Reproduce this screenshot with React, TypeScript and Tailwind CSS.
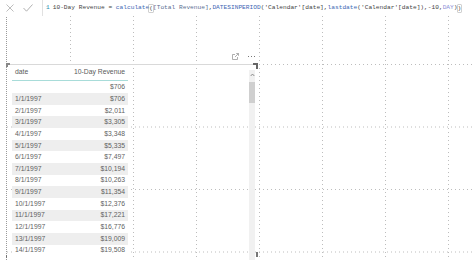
import React from "react";

const rows: [string, string][] = [
  ["", "$706"],
  ["1/1/1997", "$706"],
  ["2/1/1997", "$2,011"],
  ["3/1/1997", "$3,305"],
  ["4/1/1997", "$3,348"],
  ["5/1/1997", "$5,335"],
  ["6/1/1997", "$7,497"],
  ["7/1/1997", "$10,194"],
  ["8/1/1997", "$10,263"],
  ["9/1/1997", "$11,354"],
  ["10/1/1997", "$12,376"],
  ["11/1/1997", "$17,221"],
  ["12/1/1997", "$16,776"],
  ["13/1/1997", "$19,009"],
  ["14/1/1997", "$19,508"],
];

const gridX = [70, 133, 196, 259, 322, 385, 448];
const gridY = [64, 126.5, 189, 251.5];

function CanvasGrid() {
  return (
    <svg className="absolute inset-0" width={474} height={260}>
      {gridX.map((x) => (
        <line key={x} x1={x + 0.5} y1={16} x2={x + 0.5} y2={260} stroke="#bdbdbd" strokeDasharray="1 3" />
      ))}
      {gridY.map((y) => (
        <line key={y} x1={7} y1={y + 0.5} x2={474} y2={y + 0.5} stroke="#bdbdbd" strokeDasharray="1 3" />
      ))}
      {/* page edge */}
      <line x1={6.5} y1={17} x2={6.5} y2={260} stroke="#9a9a9a" strokeDasharray="1 1" />
    </svg>
  );
}

function FormulaBar() {
  return (
    <div className="relative z-10 flex h-[16px] w-full bg-white">
      <div className="flex w-[43px] items-center gap-[9px] border-r border-[#e1e1e1] pl-[6px]">
        <svg width="8" height="8" viewBox="0 0 8 8">
          <path d="M0.5 0.5 L7.5 7.5 M7.5 0.5 L0.5 7.5" stroke="#b5b5b5" strokeWidth="0.9" fill="none" />
        </svg>
        <svg width="10" height="8" viewBox="0 0 10 8">
          <path d="M0.5 4 L3.5 7.2 L9.5 0.5" stroke="#a8a8a8" strokeWidth="0.9" fill="none" />
        </svg>
      </div>
      <div className="flex items-center pl-[3px] font-['Liberation_Mono',monospace] text-[6.2px] text-[#444] whitespace-pre">
        <span className="mr-[3px] text-[#2b91af]">1</span>
        <span>10-Day Revenue = </span>
        <span className="text-[#3e68b4]">calculate</span>
        <span className="inline-block h-[7px] leading-[7px] shadow-[0_0_0_0.5px_#a0a0a0]">(</span>
        <span className="text-[#5a6f93]">[Total Revenue]</span>
        <span>,</span>
        <span className="text-[#3e68b4]">DATESINPERIOD</span>
        <span>('Calendar'[date],</span>
        <span className="text-[#3e68b4]">lastdate</span>
        <span>('Calendar'[date]),-10,</span>
        <span className="text-[#8b8fd8]">DAY</span>
        <span>)</span>
        <span className="inline-block h-[7px] leading-[7px] shadow-[0_0_0_0.5px_#a0a0a0]">)</span>
      </div>
    </div>
  );
}

function TableVisual() {
  return (
    <div className="absolute left-[8px] top-[64px] h-[200px] w-[250px]">
      {/* header icons */}
      <div className="absolute right-[3px] top-[-11px] flex items-center gap-[9px]">
        <svg width="7" height="7" viewBox="0 0 7 7">
          <path d="M0.5 1.5 V6.5 H5.5 M0.5 1.5 H3 M5.5 6.5 V4" stroke="#9a9a9a" strokeWidth="0.8" fill="none" />
          <path d="M3 4 L6.5 0.5 M4.2 0.5 H6.5 V2.8" stroke="#9a9a9a" strokeWidth="0.8" fill="none" />
        </svg>
        <div className="flex gap-[1.5px]">
          <div className="h-[1.5px] w-[1.5px] bg-[#777]" />
          <div className="h-[1.5px] w-[1.5px] bg-[#777]" />
          <div className="h-[1.5px] w-[1.5px] bg-[#777]" />
        </div>
      </div>
      {/* top border and corner marks */}
      <div className="absolute left-0 top-0 h-px w-[247px] bg-[#d9d9d9]" />
      <div className="absolute left-[-2px] top-[-1px] h-[1.5px] w-[4px] bg-[#888]" />
      <div className="absolute left-[-2px] top-[-1px] h-[4px] w-[1.5px] bg-[#888]" />
      <div className="absolute right-0 top-[-1px] h-[2px] w-[5px] bg-[#666]" />
      <div className="absolute right-0 top-[-1px] h-[6px] w-[2px] bg-[#666]" />
      <div className="absolute bottom-[7px] right-0 h-[5px] w-[2px] bg-[#777]" />
      <div className="absolute bottom-[6px] left-[-2px] h-[3px] w-[1px] bg-[#777]" />

      <div className="flex pt-px">
        <div className="ml-[4px] w-[116px] bg-white font-['Liberation_Sans',Arial,sans-serif] text-[6.8px]">
          <div className="flex h-[16px] items-center justify-between border-b-[1.5px] border-[#a8dcd9] px-[3px] text-[#5a5a5a]">
            <span>date</span>
            <span>10-Day Revenue</span>
          </div>
          <div className="pt-[0.5px]">
            {rows.map(([d, v], i) => (
              <div
                key={i}
                className={`flex h-[11.67px] items-center justify-between px-[3px] text-[#5f5f5f] ${i % 2 === 1 ? "bg-[#eeeeee]" : "bg-white"}`}
              >
                <span>{d}</span>
                <span>{v}</span>
              </div>
            ))}
          </div>
        </div>
        <div className="ml-[121px] mt-[5px] flex h-[200px] w-[6px] flex-col items-center bg-[#f1f1f1]">
          <svg width="5" height="4" viewBox="0 0 5 4" className="mt-[3px]">
            <path d="M0.7 3 L2.5 1 L4.3 3" stroke="#777" strokeWidth="0.8" fill="none" />
          </svg>
          <div className="mt-[5px] h-[21px] w-[6px] bg-[#cfcfcf]" />
        </div>
      </div>
    </div>
  );
}

export default function App() {
  return (
    <div className="relative h-[260px] w-[474px] overflow-hidden bg-white">
      <CanvasGrid />
      <FormulaBar />
      <TableVisual />
    </div>
  );
}
